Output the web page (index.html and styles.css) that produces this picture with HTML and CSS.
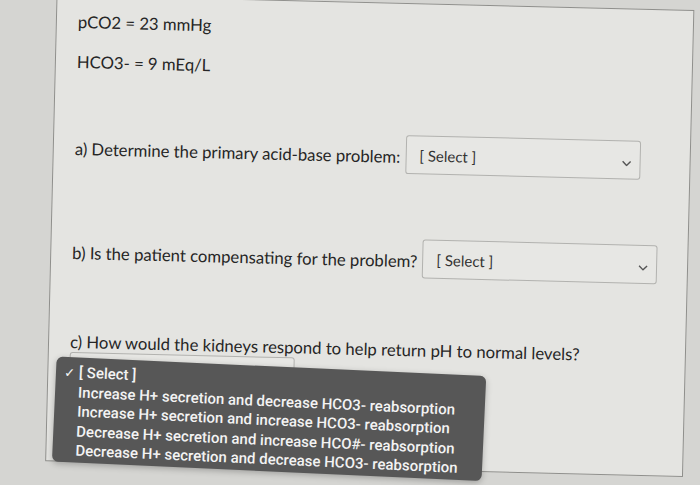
FILE: index.html
```html
<!DOCTYPE html>
<html lang="en">
<head>
    <meta charset="UTF-8">
    <meta name="viewport" content="width=device-width, initial-scale=1.0">
    <title>Quiz question</title>
    <link rel="stylesheet" href="styles.css">
</head>
<body>
<div class="page">
    <div class="card">
        <p class="given">pCO2 = 23 mmHg</p>
        <p class="given">HCO3- = 9 mEq/L</p>

        <div class="question q-a">
            <span class="label">a) Determine the primary acid-base problem:</span>
            <span class="select">
                <span class="select-text">[ Select ]</span>
                <svg class="chevron" width="10" height="6" viewBox="0 0 10 6"><path d="M1 1 L5 5 L9 1" fill="none" stroke="#555" stroke-width="1.4"/></svg>
            </span>
        </div>

        <div class="question q-b">
            <span class="label">b) Is the patient compensating for the problem?</span>
            <span class="select">
                <span class="select-text">[ Select ]</span>
                <svg class="chevron" width="10" height="6" viewBox="0 0 10 6"><path d="M1 1 L5 5 L9 1" fill="none" stroke="#555" stroke-width="1.4"/></svg>
            </span>
        </div>

        <div class="question-stack q-c">
            <span class="label">c) How would the kidneys respond to help return pH to normal levels?</span>
            <span class="select select-short"></span>
        </div>

        <ul class="menu">
            <li class="menu-item"><span class="tick">✓</span>[ Select ]</li>
            <li class="menu-item"><span class="tick"></span>Increase H+ secretion and decrease HCO3- reabsorption</li>
            <li class="menu-item"><span class="tick"></span>Increase H+ secretion and increase HCO3- reabsorption</li>
            <li class="menu-item"><span class="tick"></span>Decrease H+ secretion and increase HCO#- reabsorption</li>
            <li class="menu-item"><span class="tick"></span>Decrease H+ secretion and decrease HCO3- reabsorption</li>
        </ul>
    </div>
</div>
</body>
</html>
```

FILE: styles.css
```css
html, body {
    height: 485px;
    overflow: hidden;
}
body {
    margin: 0;
    background-color: #d5d5d2;
    font-family: Lato, "Open Sans", sans-serif;
    color: #262626;
}
.page {
    width: 700px;
    height: 485px;
    padding-left: 56px;
    box-sizing: border-box;
    transform: rotate(1.4deg);
    transform-origin: 78px 22px;
}
.card {
    position: relative;
    margin-top: -5px;
    width: 638px;
    height: 467px;
    box-sizing: border-box;
    border: 1px solid #8f8f8c;
    background-color: #e4e4e1;
    padding: 14px 0 0 21px;
}
.given {
    margin: 0;
    font-size: 16.7px;
    line-height: 24px;
}
.given + .given {
    margin-top: 16px;
}
.question {
    display: flex;
    align-items: flex-start;
    gap: 5px;
}
.label {
    font-size: 16.7px;
    line-height: 24px;
    white-space: nowrap;
}
.question .label {
    margin-top: 10px;
}
.q-a {
    margin-top: 53px;
}
.q-b {
    margin-top: 65px;
}
.question-stack {
    display: flex;
    flex-direction: column;
    align-items: flex-start;
    margin-top: 60px;
}
.select {
    width: 235px;
    height: 39px;
    box-sizing: border-box;
    border: 1px solid #b2b2af;
    border-radius: 3px;
    background-color: #e7e7e4;
    display: flex;
    align-items: center;
    justify-content: space-between;
    padding: 0 8px 0 13px;
    font-size: 15px;
    color: #333;
}
.select-short {
    width: 225px;
    margin-top: -2px;
}
.chevron {
    margin-top: 6px;
}
.menu {
    position: absolute;
    left: 8px;
    top: 361px;
    width: 430px;
    height: 105px;
    box-sizing: border-box;
    margin: 0;
    padding: 6px 0 0 8px;
    list-style: none;
    background-color: #575757;
    border-radius: 6px;
    box-shadow: 0 2px 6px rgba(0,0,0,0.25);
    transform: rotate(1.2deg);
    transform-origin: 0 0;
    color: #f3f3f3;
    font-family: Roboto, "Liberation Sans", sans-serif;
    font-weight: 500;
    font-size: 15px;
    line-height: 19.6px;
}
.menu-item {
    display: flex;
    white-space: nowrap;
}
.tick {
    width: 15px;
    font-size: 13px;
}
```
